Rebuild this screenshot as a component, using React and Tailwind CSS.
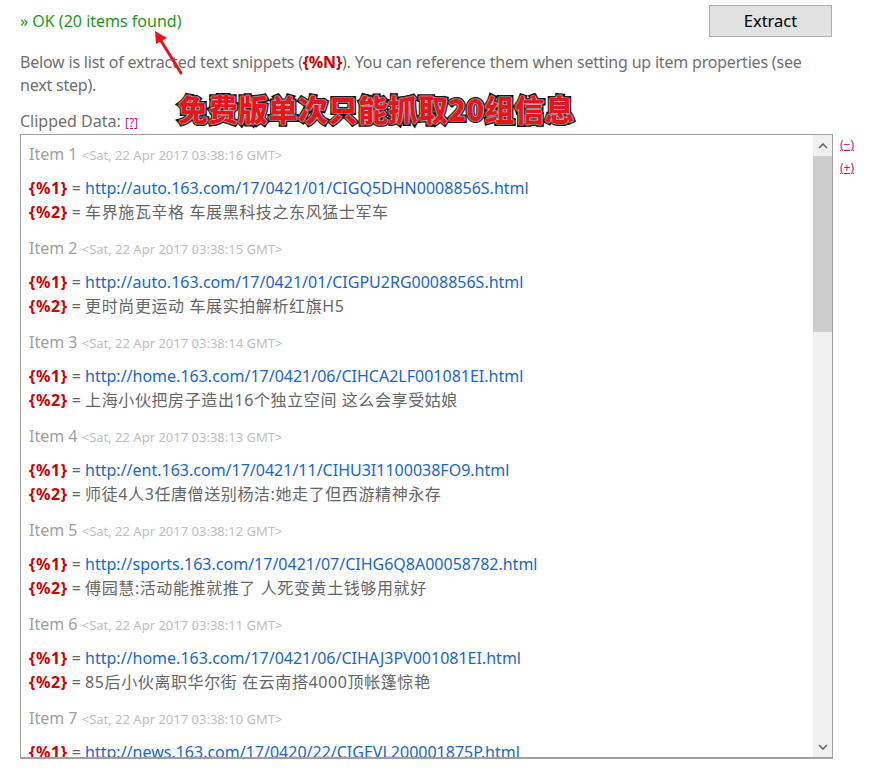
import React from 'react';

const items = [
  { n: 1, date: 'Sat, 22 Apr 2017 03:38:16 GMT', url: 'http://auto.163.com/17/0421/01/CIGQ5DHN0008856S.html', title: '车界施瓦辛格 车展黑科技之东风猛士军车' },
  { n: 2, date: 'Sat, 22 Apr 2017 03:38:15 GMT', url: 'http://auto.163.com/17/0421/01/CIGPU2RG0008856S.html', title: '更时尚更运动 车展实拍解析红旗H5' },
  { n: 3, date: 'Sat, 22 Apr 2017 03:38:14 GMT', url: 'http://home.163.com/17/0421/06/CIHCA2LF001081EI.html', title: '上海小伙把房子造出16个独立空间 这么会享受姑娘' },
  { n: 4, date: 'Sat, 22 Apr 2017 03:38:13 GMT', url: 'http://ent.163.com/17/0421/11/CIHU3I1100038FO9.html', title: '师徒4人3任唐僧送别杨洁:她走了但西游精神永存' },
  { n: 5, date: 'Sat, 22 Apr 2017 03:38:12 GMT', url: 'http://sports.163.com/17/0421/07/CIHG6Q8A00058782.html', title: '傅园慧:活动能推就推了 人死变黄土钱够用就好' },
  { n: 6, date: 'Sat, 22 Apr 2017 03:38:11 GMT', url: 'http://home.163.com/17/0421/06/CIHAJ3PV001081EI.html', title: '85后小伙离职华尔街 在云南搭4000顶帐篷惊艳' },
  { n: 7, date: 'Sat, 22 Apr 2017 03:38:10 GMT', url: 'http://news.163.com/17/0420/22/CIGEVL200001875P.html', title: '' },
];

const Var = ({ children }) => <span className="font-bold text-[#cc0000] tracking-[0.6px]">{children}</span>;

const Item = ({ item }) => (
  <div className="mb-3">
    <div className="h-6 leading-6 text-[#a0a0a0]">
      Item {item.n} <span className="text-[13px] text-[#c0c0c0]">&lt;{item.date}&gt;</span>
    </div>
    <div className="mt-[10px] leading-6">
      <div className="whitespace-nowrap">
        <Var>{'{%1}'}</Var> = <span className="text-[#1a66cc]">{item.url}</span>
      </div>
      <div className="whitespace-nowrap">
        <Var>{'{%2}'}</Var> = <span className="tracking-[0.6px]">{item.title}</span>
      </div>
    </div>
  </div>
);

export default function App() {
  return (
    <div className="relative w-[888px] h-[781px] overflow-hidden bg-white text-[16px] text-[#707070] font-['Noto_Sans','Noto_Sans_CJK_SC',sans-serif]">
      <div className="pl-5 pr-[56px] pt-[5px]">
        <div className="flex items-center justify-between h-[32px]">
          <div className="text-[#1a9a1a]">» OK (20 items found)</div>
          <button className="w-[123px] h-[32px] bg-[#e1e1e1] border border-[#adadad] text-black text-[16.5px]">Extract</button>
        </div>
        <p className="mt-[14px] leading-[23px] tracking-[-0.2px]">
          Below is list of extracted text snippets (<span className="font-bold text-[#cc0000]">{'{%N}'}</span>). You can reference them when setting up item properties (see next step).
        </p>
        <div className="mt-[12px] h-6 leading-6">
          Clipped Data: <span className="text-[12px] text-[#c0187a] underline">[?]</span>
        </div>
      </div>
      <div className="flex pl-5 mt-[1px]">
        <div className="flex w-[813px] h-[625px] border border-[#a0a0a0] border-b-2">
          <div className="flex-1 overflow-hidden pt-[7px] pl-2 text-[#666]">
            {items.map(it => <Item key={it.n} item={it} />)}
          </div>
          <div className="w-[19px] flex flex-col bg-[#f0f0f0]">
            <div className="h-[21px] flex items-center justify-center">
              <svg width="10" height="6" viewBox="0 0 10 6"><path d="M1 5 L5 1 L9 5" stroke="#606060" strokeWidth="1.5" fill="none" /></svg>
            </div>
            <div className="h-[176px] bg-[#cdcdcd]" />
            <div className="flex-1" />
            <div className="h-[21px] flex items-center justify-center">
              <svg width="10" height="6" viewBox="0 0 10 6"><path d="M1 1 L5 5 L9 1" stroke="#606060" strokeWidth="1.5" fill="none" /></svg>
            </div>
          </div>
        </div>
        <div className="pl-[7px] -mt-[1px] flex flex-col text-[12px] text-[#c0187a] leading-[23px]">
          <span className="underline">(−)</span>
          <span className="underline">(+)</span>
        </div>
      </div>

      {/* annotation overlay */}
      <svg className="absolute left-[148px] top-[28px]" width="40" height="52" viewBox="0 0 40 52">
        <line x1="33" y1="45" x2="10" y2="8" stroke="#e8141c" strokeWidth="3" strokeLinecap="round" />
        <path d="M7 3 L19 10 L8 16 Z" fill="#e8141c" />
      </svg>
      <div className="absolute left-[178px] top-[89px] text-[30px] leading-[38px] font-black text-[#e8141c] [paint-order:stroke_fill] [-webkit-text-stroke:4px_black] [text-shadow:0_0_2px_#fff,0_0_2px_#fff] font-['Noto_Sans_CJK_SC',sans-serif]">
        免费版单次只能抓取20组信息
      </div>
    </div>
  );
}
